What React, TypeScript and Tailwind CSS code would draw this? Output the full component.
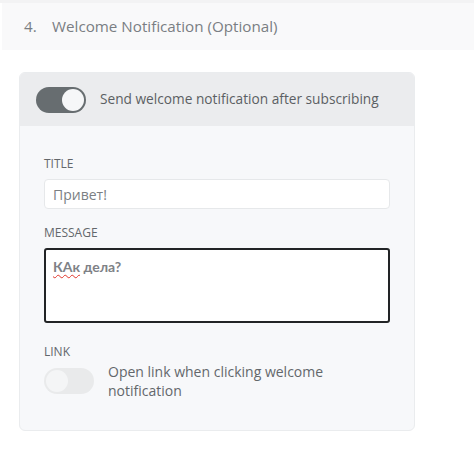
import { useState } from "react";

const Toggle = ({ on, onChange }: { on: boolean; onChange: () => void }) => (
  <button
    type="button"
    onClick={onChange}
    className={`relative h-[26px] w-[50px] flex-shrink-0 rounded-full ${on ? "bg-[#676d70]" : "bg-[#e9eaeb]"}`}
  >
    <span
      className={`absolute top-[2px] h-[22px] w-[22px] rounded-full ${on ? "left-[26px] bg-[#f6f7f8]" : "left-[2px] bg-[#f4f5f6]"}`}
    />
  </button>
);

export default function App() {
  const [welcome, setWelcome] = useState(true);
  const [link, setLink] = useState(false);
  const [title, setTitle] = useState("Привет!");

  return (
    <div className="min-h-[449px] w-[474px] bg-white font-['Open_Sans','Noto_Sans',sans-serif]">
      <div className="h-[3px] bg-[#f3f3f4]" />
      <div className="ml-[2px] flex h-[47px] items-center bg-[#f9f9fa] pl-[22px] text-[15.2px] text-[#7a7e83]">
        <span className="w-[28px]">4.</span>
        <span>Welcome Notification (Optional)</span>
      </div>

      <div className="ml-[19px] mt-[22px] w-[396px] overflow-hidden rounded-[6px] border border-[#eaecee] bg-[#f7f8fa]">
        <div className="flex h-[53px] items-center gap-[14px] bg-[#ebecee] pl-[16px]">
          <Toggle on={welcome} onChange={() => setWelcome(!welcome)} />
          <span className="text-[13.7px] text-[#5b5f63]">
            Send welcome notification after subscribing
          </span>
        </div>

        <div className="px-6 pb-[30px] pt-[30px]">
          <label className="block text-[12px] font-medium leading-4 uppercase text-[#63676b]">Title</label>
          <input
            value={title}
            onChange={(e) => setTitle(e.target.value)}
            className="mt-[7px] h-[30px] w-full rounded-[4px] border border-[#e6e8ea] bg-white px-[8px] text-[14px] text-[#7b7f83] outline-none"
          />

          <label className="mt-[16px] block text-[12px] font-medium leading-4 uppercase text-[#63676b]">Message</label>
          <div
            contentEditable
            suppressContentEditableWarning
            className="mt-[7px] h-[75px] w-full rounded-[3px] border-2 border-[#222426] bg-white px-[7px] py-[6px] font-['Lato',sans-serif] text-[14px] font-bold text-[#7e8186] outline-none"
          >
            <span className="underline decoration-[#e0362c] decoration-wavy decoration-1 underline-offset-2">КАк</span> дела?
          </div>

          <label className="mt-[21px] block text-[12px] font-medium leading-4 uppercase text-[#63676b]">Link</label>
          <div className="mt-[2px] flex items-start gap-[14px]">
            <div className="pt-[6px]">
              <Toggle on={link} onChange={() => setLink(!link)} />
            </div>
            <span className="w-[235px] text-[14px] leading-[19px] text-[#63676b]">
              Open link when clicking welcome notification
            </span>
          </div>
        </div>
      </div>
    </div>
  );
}
